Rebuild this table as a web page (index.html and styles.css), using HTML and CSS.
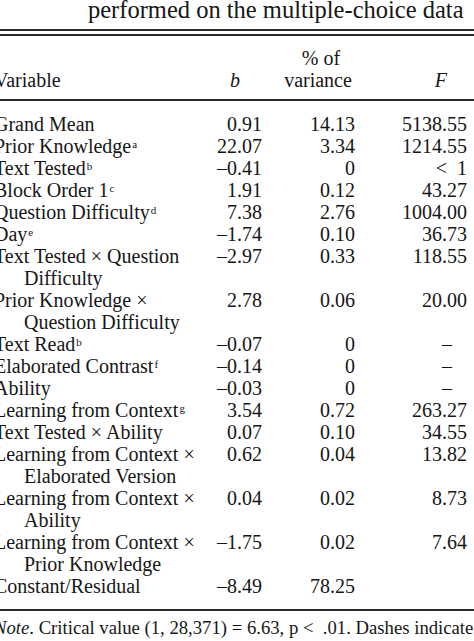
FILE: index.html
```html
<!DOCTYPE html>
<html>
<head>
<meta charset="utf-8">
<link rel="stylesheet" href="styles.css">
</head>
<body>
<div class="page">
  <div class="title">performed on the multiple-choice data</div>
  <div class="rule-double"></div>
  <div class="row head">
    <div class="label">Variable</div>
    <div class="num hb"><i>b</i></div>
    <div class="num hv"><span class="pct">% of</span><br>variance</div>
    <div class="num hf"><i>F</i></div>
  </div>
  <div class="rule rule-head"></div>
  <div class="body">
    <div class="row"><div class="label">Grand Mean</div><div class="num">0.91</div><div class="num">14.13</div><div class="num">5138.55</div></div>
    <div class="row"><div class="label">Prior Knowledge<sup>a</sup></div><div class="num">22.07</div><div class="num">3.34</div><div class="num">1214.55</div></div>
    <div class="row"><div class="label">Text Tested<sup>b</sup></div><div class="num">–0.41</div><div class="num">0</div><div class="num">&lt;&nbsp;&nbsp;1</div></div>
    <div class="row"><div class="label">Block Order 1<sup>c</sup></div><div class="num">1.91</div><div class="num">0.12</div><div class="num">43.27</div></div>
    <div class="row"><div class="label">Question Difficulty<sup>d</sup></div><div class="num">7.38</div><div class="num">2.76</div><div class="num">1004.00</div></div>
    <div class="row"><div class="label">Day<sup>e</sup></div><div class="num">–1.74</div><div class="num">0.10</div><div class="num">36.73</div></div>
    <div class="row"><div class="label">Text Tested × Question<br>Difficulty</div><div class="num">–2.97</div><div class="num">0.33</div><div class="num">118.55</div></div>
    <div class="row"><div class="label">Prior Knowledge ×<br>Question Difficulty</div><div class="num">2.78</div><div class="num">0.06</div><div class="num">20.00</div></div>
    <div class="row"><div class="label">Text Read<sup>b</sup></div><div class="num">–0.07</div><div class="num">0</div><div class="num dash">–</div></div>
    <div class="row"><div class="label">Elaborated Contrast<sup>f</sup></div><div class="num">–0.14</div><div class="num">0</div><div class="num dash">–</div></div>
    <div class="row"><div class="label">Ability</div><div class="num">–0.03</div><div class="num">0</div><div class="num dash">–</div></div>
    <div class="row"><div class="label">Learning from Context<sup>g</sup></div><div class="num">3.54</div><div class="num">0.72</div><div class="num">263.27</div></div>
    <div class="row"><div class="label">Text Tested × Ability</div><div class="num">0.07</div><div class="num">0.10</div><div class="num">34.55</div></div>
    <div class="row"><div class="label">Learning from Context ×<br>Elaborated Version</div><div class="num">0.62</div><div class="num">0.04</div><div class="num">13.82</div></div>
    <div class="row"><div class="label">Learning from Context ×<br>Ability</div><div class="num">0.04</div><div class="num">0.02</div><div class="num">8.73</div></div>
    <div class="row"><div class="label">Learning from Context ×<br>Prior Knowledge</div><div class="num">–1.75</div><div class="num">0.02</div><div class="num">7.64</div></div>
    <div class="row"><div class="label">Constant/Residual</div><div class="num">–8.49</div><div class="num">78.25</div><div class="num"></div></div>
  </div>
  <div class="rule rule-foot"></div>
  <p class="note"><i>Note</i>. Critical value (1, 28,371) = 6.63, p &lt;&nbsp; .01. Dashes indicate</p>
</div>
</body>
</html>
```

FILE: styles.css
```css
html, body {
  margin: 0;
  padding: 0;
  background: #ffffff;
}

body {
  width: 474px;
  height: 641px;
  overflow: hidden;
  color: #161616;
  font-family: "Liberation Serif", "Times New Roman", serif;
  font-size: 20px;
  line-height: 22px;
}

.page {
  margin-left: -6px;
  width: 480px;
}

.title {
  font-size: 24.5px;
  line-height: 24px;
  margin-top: -2px;
  padding-left: 94px;
  white-space: nowrap;
}

.rule-double {
  margin-top: 7px;
  height: 3px;
  border-top: 2px solid #2a2a2a;
  border-bottom: 2px solid #2a2a2a;
}

.row {
  display: grid;
  grid-template-columns: 212px 56px 93px 112px;
  align-items: start;
}

.head {
  margin-top: 11px;
  align-items: end;
}

.label {
  white-space: nowrap;
  padding-left: 30px;
  text-indent: -30px;
}

.num {
  text-align: right;
  white-space: nowrap;
}

.hb {
  text-align: center;
  padding-left: 2px;
}

.hv {
  text-align: center;
  padding-left: 19px;
}

.pct {
  margin-left: 6px;
}

.hf {
  padding-right: 20px;
}

.dash {
  padding-right: 15px;
}

.rule {
  border-top: 2px solid #2a2a2a;
}

.rule-head {
  margin-top: 8px;
}

.body {
  margin-top: 12px;
}

.rule-foot {
  margin-top: 12px;
}

sup {
  font-size: 11px;
  line-height: 0;
  vertical-align: 5px;
  margin-left: 1px;
}

.note {
  margin: 6px 0 0 0;
  white-space: nowrap;
  font-size: 18.7px;
}
```
